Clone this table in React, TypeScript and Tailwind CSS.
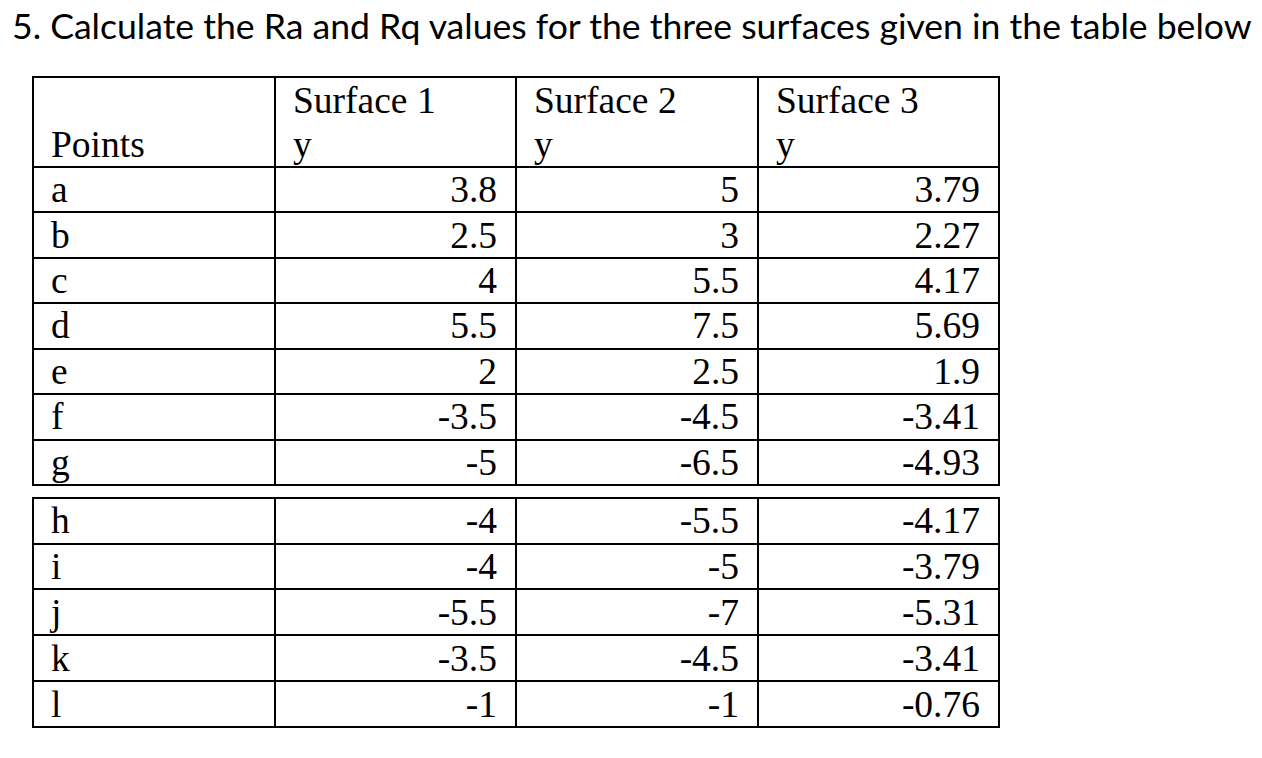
import React from "react";

const rows1: [string, string, string, string][] = [
  ["a", "3.8", "5", "3.79"],
  ["b", "2.5", "3", "2.27"],
  ["c", "4", "5.5", "4.17"],
  ["d", "5.5", "7.5", "5.69"],
  ["e", "2", "2.5", "1.9"],
  ["f", "-3.5", "-4.5", "-3.41"],
  ["g", "-5", "-6.5", "-4.93"],
];

const rows2: [string, string, string, string][] = [
  ["h", "-4", "-5.5", "-4.17"],
  ["i", "-4", "-5", "-3.79"],
  ["j", "-5.5", "-7", "-5.31"],
  ["k", "-3.5", "-4.5", "-3.41"],
  ["l", "-1", "-1", "-0.76"],
];

const cols = "grid grid-cols-[242px_241px_242px_241px]";

function DataRow({ r, h }: { r: [string, string, string, string]; h: string }) {
  return (
    <div className={`${cols} ${h} border-b-2 border-black`}>
      <div className="border-r-2 border-black pl-[17px] flex items-center leading-[43px]">{r[0]}</div>
      <div className="border-r-2 border-black pr-[18px] flex items-center justify-end leading-[43px]">{r[1]}</div>
      <div className="border-r-2 border-black pr-[18px] flex items-center justify-end leading-[43px]">{r[2]}</div>
      <div className="border-r-2 border-black pr-[18px] flex items-center justify-end leading-[43px]">{r[3]}</div>
    </div>
  );
}

export default function App() {
  return (
    <div className="w-[1262px] h-[758px] bg-white overflow-hidden text-black">
      <div className="h-[76px] pl-[12px] pt-[5px] font-['Lato',sans-serif] text-[35.6px] leading-[42px] whitespace-nowrap">
        5. Calculate the Ra and Rq values for the three surfaces given in the table below
      </div>
      <div className="ml-[32px] font-['Liberation_Serif',serif] text-[37.5px]">
        <div className="w-[968px] border-l-2 border-t-2 border-black">
          <div className={`${cols} h-[90px] border-b-2 border-black leading-[44px]`}>
            <div className="border-r-2 border-black pl-[17px] flex items-end">Points</div>
            <div className="border-r-2 border-black pl-[17px] pt-[1px]">
              <div>Surface 1</div>
              <div>y</div>
            </div>
            <div className="border-r-2 border-black pl-[17px] pt-[1px]">
              <div>Surface 2</div>
              <div>y</div>
            </div>
            <div className="border-r-2 border-black pl-[17px] pt-[1px]">
              <div>Surface 3</div>
              <div>y</div>
            </div>
          </div>
          {rows1.map((r) => (
            <DataRow key={r[0]} r={r} h="h-[45.43px]" />
          ))}
        </div>
        <div className="mt-[10.7px] w-[968px] border-l-2 border-t-2 border-black">
          {rows2.map((r) => (
            <DataRow key={r[0]} r={r} h="h-[45.86px]" />
          ))}
        </div>
      </div>
    </div>
  );
}
